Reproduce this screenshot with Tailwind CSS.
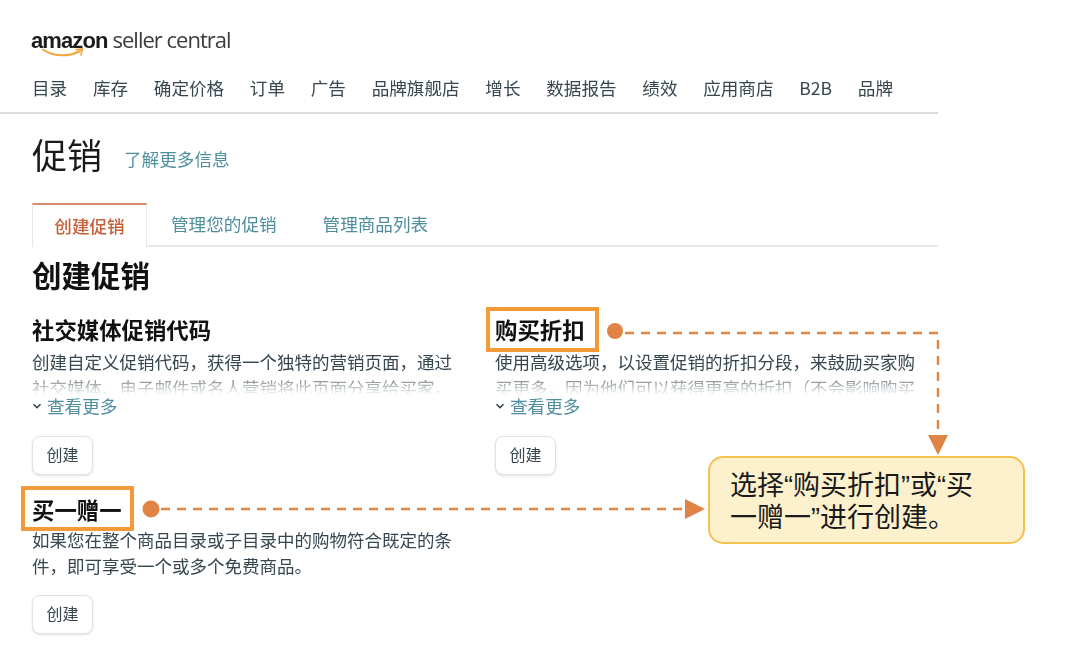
<!DOCTYPE html>
<html lang="zh-CN">
<head>
    <meta charset="UTF-8">
    <meta name="viewport" content="width=device-width, initial-scale=1.0">
    <title>促销</title>
    <script src="https://cdn.jsdelivr.net/npm/@tailwindcss/browser@4"></script>
</head>
<body class="bg-white overflow-hidden font-['Noto_Sans_CJK_SC','Noto_Sans',sans-serif]">
<div class="relative w-[1080px] h-[658px] blur-[0.5px]">
    <div class="w-[938px]">

        <!-- header -->
        <header class="h-[114px] border-b-2 border-[#dcdcdc] px-8 pt-[26px]">
            <div class="relative h-[36px] flex items-baseline whitespace-nowrap">
                <span class="-ml-[1px] font-['Liberation_Sans',sans-serif] font-bold text-[22px] leading-[26px] tracking-[-0.9px] text-[#1c1c1c]">amazon</span>
                <span class="ml-[5px] font-['Open_Sans',sans-serif] text-[22px] leading-[26px] tracking-[-1px] text-[#3c3c3c]">seller central</span>
                <svg class="absolute left-[10px] top-[22px]" width="44" height="12" viewBox="0 0 44 12" fill="none">
                    <path d="M1 1.5C11 8.5 26 9.5 38 3" stroke="#f0a63c" stroke-width="2" stroke-linecap="round"/>
                    <path d="M34 1.6L40.5 1L39 7" stroke="#f0a63c" stroke-width="1.6" stroke-linecap="round"/>
                </svg>
            </div>
            <nav class="mt-[13px] flex gap-[25.7px] text-[17.6px] leading-[26px] text-[#37474f] whitespace-nowrap">
                <a>目录</a><a>库存</a><a>确定价格</a><a>订单</a><a>广告</a><a>品牌旗舰店</a><a>增长</a><a>数据报告</a><a>绩效</a><a>应用商店</a><a>B2B</a><a>品牌</a>
            </nav>
        </header>

        <main class="pl-8">
            <div class="flex items-baseline h-[89px] pt-[15px]">
                <h1 class="text-[35px] leading-[50px] text-[#1a1a1a]">促销</h1>
                <a class="ml-[22px] -translate-y-[3px] text-[17.6px] text-[#4f8e9e]">了解更多信息</a>
            </div>

            <!-- tabs -->
            <div class="flex h-[44px] border-b-2 border-[#e8e8e8] text-[17.6px] whitespace-nowrap">
                <div class="w-[115px] h-[44px] -mb-[2px] bg-white border-t-2 border-x border-t-[#d98a6e] border-x-[#e8e8e8] flex items-center justify-center font-medium text-[#c2603a]">创建促销</div>
                <div class="ml-[24px] flex items-center text-[#4f8e9e]">管理您的促销</div>
                <div class="ml-[46px] flex items-center text-[#4f8e9e]">管理商品列表</div>
            </div>

            <h2 class="mt-[6px] text-[29.5px] leading-[42px] font-bold text-[#111]">创建促销</h2>

            <div class="mt-[20px] grid grid-cols-[463px_420px]">
                <!-- social media promo code -->
                <section class="h-[180px]">
                    <h3 class="mb-[6px] text-[22.4px] leading-[28px] font-bold text-[#111] whitespace-nowrap">社交媒体促销代码</h3>
                    <div class="relative h-[46px] w-[425px] overflow-hidden text-[17.5px] leading-[26px] text-[#37474f]">
                        <p>创建自定义促销代码，获得一个独特的营销页面，通过社交媒体、电子邮件或名人营销将此页面分享给买家。</p>
                        <div class="absolute inset-x-0 top-[24px] h-[22px] bg-gradient-to-b from-white/10 to-white"></div>
                    </div>
                    <a class="flex items-center h-[22px] text-[17.6px] text-[#4f8e9e]">
                        <svg class="w-[10px] h-[6px] mr-[5px]" viewBox="0 0 10 6" fill="none"><path d="M1.5 1.2L5 4.6L8.5 1.2" stroke="#37474f" stroke-width="1.6"/></svg>
                        查看更多
                    </a>
                    <button class="mt-[19px] w-[61px] h-[39px] pb-[4px] bg-white border border-[#e2e2e2] rounded-lg shadow-sm text-[16px] text-[#37474f]">创建</button>
                </section>

                <!-- purchase discount -->
                <section class="h-[180px]">
                    <h3 class="relative mb-[6px] text-[22.4px] leading-[28px] font-bold text-[#111] whitespace-nowrap">购买折扣<span class="absolute -left-[9px] -top-[8px] w-[113px] h-[45px] border-[4px] border-[#f59a38]"></span></h3>
                    <div class="relative h-[46px] w-[425px] overflow-hidden text-[17.5px] leading-[26px] text-[#37474f]">
                        <p>使用高级选项，以设置促销的折扣分段，来鼓励买家购买更多，因为他们可以获得更高的折扣（不会影响购买</p>
                        <div class="absolute inset-x-0 top-[24px] h-[22px] bg-gradient-to-b from-white/10 to-white"></div>
                    </div>
                    <a class="flex items-center h-[22px] text-[17.6px] text-[#4f8e9e]">
                        <svg class="w-[10px] h-[6px] mr-[5px]" viewBox="0 0 10 6" fill="none"><path d="M1.5 1.2L5 4.6L8.5 1.2" stroke="#37474f" stroke-width="1.6"/></svg>
                        查看更多
                    </a>
                    <button class="mt-[19px] w-[61px] h-[39px] pb-[4px] bg-white border border-[#e2e2e2] rounded-lg shadow-sm text-[16px] text-[#37474f]">创建</button>
                </section>

                <!-- buy one get one -->
                <section>
                    <h3 class="relative mb-[4px] text-[22.4px] leading-[28px] font-bold text-[#111] whitespace-nowrap">买一赠一<span class="absolute -left-[11px] -top-[9px] w-[113px] h-[45px] border-[4px] border-[#f59a38]"></span></h3>
                    <p class="w-[425px] text-[17.5px] leading-[26px] text-[#37474f]">如果您在整个商品目录或子目录中的购物符合既定的条件，即可享受一个或多个免费商品。</p>
                    <button class="mt-[16px] w-[61px] h-[39px] pb-[4px] bg-white border border-[#e2e2e2] rounded-lg shadow-sm text-[16px] text-[#37474f]">创建</button>
                </section>
            </div>
        </main>
    </div>

    <!-- annotation arrows -->
    <svg class="absolute inset-0 pointer-events-none" width="1080" height="658" fill="none">
        <circle cx="615" cy="331" r="8" fill="#e08344"/>
        <path d="M625 333H938V435" stroke="#e08344" stroke-width="2.4" stroke-dasharray="9 7"/>
        <path d="M928 435H948L938 455Z" fill="#e08344"/>
        <circle cx="151" cy="509" r="8.5" fill="#e08344"/>
        <path d="M161 509H686" stroke="#e08344" stroke-width="2.4" stroke-dasharray="9 7"/>
        <path d="M685 499V519L705 509Z" fill="#e08344"/>
    </svg>

    <!-- callout -->
    <div class="absolute left-[708px] top-[456px] w-[317px] h-[88px] rounded-[15px] bg-[#fdf1cd] border-2 border-[#f6c04f] pl-[20px] pt-[12px] font-['Liberation_Sans','Noto_Sans_CJK_SC',sans-serif] text-[27px] leading-[32px] text-[#1a1a1a] whitespace-nowrap">
        <p>选择“购买折扣”或“买<br>一赠一”进行创建。</p>
    </div>
</div>
</body>
</html>
